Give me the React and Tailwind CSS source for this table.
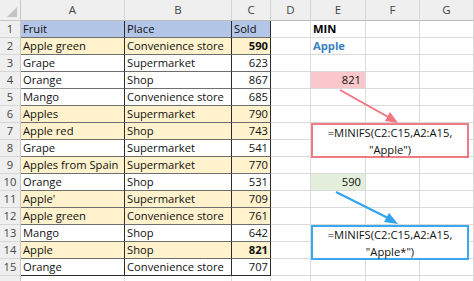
const cols = ['A', 'B', 'C', 'D', 'E', 'F', 'G']

const data = [
  ['Apple green', 'Convenience store', 590, true, true],
  ['Grape', 'Supermarket', 623],
  ['Orange', 'Shop', 867],
  ['Mango', 'Convenience store', 685],
  ['Apples', 'Supermarket', 790, true],
  ['Apple red', 'Shop', 743, true],
  ['Grape', 'Supermarket', 541],
  ['Apples from Spain', 'Supermarket', 770, true],
  ['Orange', 'Shop', 531],
  ["Apple'", 'Supermarket', 709, true],
  ['Apple green', 'Convenience store', 761, true],
  ['Mango', 'Shop', 642],
  ['Apple', 'Shop', 821, true, true],
  ['Orange', 'Convenience store', 707]
]

const grid = 'border-r border-b border-[#dadada]'
const tbl = 'border-r border-r-[#2b2b2b] border-b border-b-[#6e6e6e]'

const Cell = ({ className = '', children }) => (
  <div className={`flex items-center overflow-hidden whitespace-nowrap px-[2px] text-[#111] ${className}`}>
    {children}
  </div>
)

const extra = (r) => {
  // columns D..G for data row r (1-based)
  const out = [<Cell key="d" className={grid} />]
  if (r === 1) out.push(<Cell key="e" className={`${grid} font-bold text-black`}>MIN</Cell>)
  else if (r === 2) out.push(<Cell key="e" className={`${grid} font-bold !text-[#3a7fc1]`}>Apple</Cell>)
  else if (r === 4) out.push(<Cell key="e" className={`${grid} justify-end pr-[4px] bg-[#fac8cc]`}>821</Cell>)
  else if (r === 10) out.push(<Cell key="e" className={`${grid} justify-end pr-[4px] bg-[#e3efda]`}>590</Cell>)
  else out.push(<Cell key="e" className={grid} />)
  out.push(<Cell key="f" className={grid} />)
  out.push(<Cell key="g" className={grid} />)
  return out
}

const FormulaBox = ({ top, color, crit }) => (
  <div
    className={`absolute left-[311px] w-[158px] h-[35px] bg-white border-2 ${color} flex flex-col items-center justify-center leading-[17px] text-[#111]`}
    style={{ top }}
  >
    <span>=MINIFS(C2:C15,A2:A15,</span>
    <span>"{crit}")</span>
  </div>
)

export default function App() {
  return (
    <div className="relative w-[474px] h-[281px] overflow-hidden bg-white text-[11.2px] font-['Open_Sans',sans-serif]">
      <div className="grid grid-cols-[21px_104px_107px_39px_40px_55px_54px_54px] grid-rows-[21px_repeat(16,17px)]">
        <div className="relative bg-[#efefef] border-r border-b border-[#c8c8c8]">
          <div className="absolute right-[3px] bottom-[3px] w-0 h-0 border-l-[10px] border-l-transparent border-b-[10px] border-b-[#c4c4c4]" />
        </div>
        {cols.map((c) => (
          <div key={c} className="flex items-center justify-center bg-[#efefef] border-r border-r-[#d4d4d4] border-b border-b-[#bcbcbc] text-[#444] text-[11.5px]">
            {c}
          </div>
        ))}

        <div className="flex items-center justify-center bg-[#efefef] border-r border-r-[#c8c8c8] border-b border-b-[#d6d6d6] text-[#444]">1</div>
        <Cell className={`${tbl} bg-[#b4c6e7]`}>Fruit</Cell>
        <Cell className={`${tbl} bg-[#b4c6e7]`}>Place</Cell>
        <Cell className={`${tbl} bg-[#b4c6e7]`}>Sold</Cell>
        {extra(1)}

        {data.map(([fruit, place, sold, hi, bold], i) => {
          const r = i + 2
          const bg = hi ? 'bg-[#fff2cc]' : 'bg-white'
          const last = r === 15 ? '!border-b-[#2b2b2b]' : ''
          return [
            <div key={`h${r}`} className="flex items-center justify-center bg-[#efefef] border-r border-r-[#c8c8c8] border-b border-b-[#d6d6d6] text-[#444]">{r}</div>,
            <Cell key={`a${r}`} className={`${tbl} ${bg} ${last}`}>{fruit}</Cell>,
            <Cell key={`b${r}`} className={`${tbl} ${bg} ${last}`}>{place}</Cell>,
            <Cell key={`c${r}`} className={`${tbl} ${bg} ${last} justify-end ${bold ? 'font-bold' : ''}`}>{sold}</Cell>,
            ...extra(r).map((el) => ({ ...el, key: `${el.key}${r}` }))
          ]
        })}

        <div className="bg-[#efefef] border-r border-[#c8c8c8]" />
        {cols.map((c) => (
          <div key={`z${c}`} className="border-r border-[#dadada]" />
        ))}
      </div>

      <FormulaBox top={123} color="border-[#ef7b86]" crit="Apple" />
      <FormulaBox top={225} color="border-[#3aa8ee]" crit="Apple*" />

      <svg className="absolute inset-0 pointer-events-none" width="474" height="281">
        <line x1="340" y1="90" x2="390" y2="118" stroke="#f07580" strokeWidth="2" />
        <polygon points="398,123 385,121 390,112" fill="#f07580" />
        <line x1="336" y1="192" x2="390" y2="219" stroke="#2fa3ec" strokeWidth="2" />
        <polygon points="398,224 384,222 389,213" fill="#2fa3ec" />
      </svg>
    </div>
  )
}
